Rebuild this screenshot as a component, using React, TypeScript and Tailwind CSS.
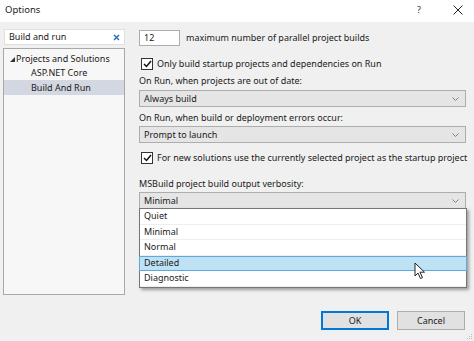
import React from "react";

const font = { fontFamily: '"Noto Sans", "Open Sans", sans-serif' };

function Chevron() {
  return (
    <svg width="7" height="4" viewBox="0 0 7 4" className="mr-[6px]">
      <path d="M0.5 0.5 L3.5 3.5 L6.5 0.5" stroke="#808080" strokeWidth="1" fill="none" />
    </svg>
  );
}

function Check() {
  return (
    <div className="w-[12px] h-[12px] border border-[#333] bg-white flex items-center justify-center shrink-0">
      <svg width="9" height="8" viewBox="0 0 9 8">
        <path d="M1 4 L3.5 6.5 L8 1" stroke="#111" strokeWidth="1.5" fill="none" />
      </svg>
    </div>
  );
}

function Select({ value }: { value: string }) {
  return (
    <div className="h-[17px] border border-[#adadad] bg-[#e5e5e5] flex items-center justify-between pl-[4px]">
      <span>{value}</span>
      <Chevron />
    </div>
  );
}

export default function App() {
  const items = ["Quiet", "Minimal", "Normal", "Detailed", "Diagnostic"];
  return (
    <div
      className="relative w-[474px] h-[341px] bg-[#f0f0f0] text-[9px] leading-[12px] text-[#1a1a1a] overflow-hidden flex flex-col whitespace-nowrap"
      style={font}
    >
      {/* title bar */}
      <div className="h-[22px] bg-white flex items-center shrink-0">
        <span className="ml-[5px] mt-[-2px] text-[9.5px]">Options</span>
        <span className="ml-auto mr-[32px] text-[#333] mt-[-2px]">?</span>
        <svg width="10" height="10" viewBox="0 0 10 10" className="mr-[11px] mt-[-2px]">
          <path d="M0.5 0.5 L9.5 9.5 M9.5 0.5 L0.5 9.5" stroke="#222" strokeWidth="1" />
        </svg>
      </div>

      <div className="flex flex-1">
        {/* left */}
        <div className="w-[122px] ml-[3px] mt-[7px] flex flex-col">
          <div className="h-[16px] ml-[1px] border border-[#e0e0e0] bg-white flex items-center justify-between pl-[4px] pr-[4px]">
            <span>Build and run</span>
            <svg width="7" height="7" viewBox="0 0 7 7">
              <path d="M1 1 L6 6 M6 1 L1 6" stroke="#1e6fc0" strokeWidth="1.4" />
            </svg>
          </div>
          <div className="mt-[3px] h-[247px] border border-[#a8a8a8] bg-[#f7f7f7] pt-[2px]">
            <div className="h-[15px] flex items-center pl-[6px]">
              <svg width="5" height="5" viewBox="0 0 5 5" className="mr-[1px] mt-[1px]">
                <path d="M5 0 L5 5 L0 5 Z" fill="#333" />
              </svg>
              <span>Projects and Solutions</span>
            </div>
            <div className="h-[14px] flex items-center pl-[27px]">ASP.NET Core</div>
            <div className="h-[15px] flex items-center pl-[27px] bg-[#d3d7e2]">Build And Run</div>
          </div>
        </div>

        {/* right */}
        <div className="ml-[14px] w-[327px] mt-[8px] flex flex-col relative">
          <div className="flex items-center h-[16px]">
            <div className="w-[41px] h-[16px] border border-[#adadad] bg-white pl-[4px] flex items-center">12</div>
            <span className="ml-[6px]">maximum number of parallel project builds</span>
          </div>
          <div className="flex items-center mt-[11px] h-[13px] ml-[2px]">
            <Check />
            <span className="ml-[4px]">Only build startup projects and dependencies on Run</span>
          </div>
          <div className="mt-[3px] h-[16px] flex items-center">On Run, when projects are out of date:</div>
          <div className="mt-[1px]"><Select value="Always build" /></div>
          <div className="mt-[3px] h-[16px] flex items-center">On Run, when build or deployment errors occur:</div>
          <div className="mt-[0px]"><Select value="Prompt to launch" /></div>
          <div className="flex items-center mt-[8px] h-[13px] ml-[2px]">
            <Check />
            <span className="ml-[4px]">For new solutions use the currently selected project as the startup project</span>
          </div>
          <div className="mt-[12px] h-[16px] flex items-center">MSBuild project build output verbosity:</div>
          <div className="mt-[0px]"><Select value="Minimal" /></div>

          {/* dropdown list overlay */}
          <div className="absolute left-0 top-[178px] w-[328px] bg-white border border-[#767676] shadow-[2px_2px_3px_rgba(0,0,0,0.35)]">
            {items.map((it) => (
              <div
                key={it}
                className={
                  it === "Detailed"
                    ? "h-[15.5px] flex items-center pl-[4px] bg-[#bee1f4] border border-[#5ea8dc] -mx-[1px]"
                    : "h-[15.5px] flex items-center pl-[4px] border-b border-[#eeeeee]"
                }
              >
                {it}
              </div>
            ))}
          </div>
        </div>
      </div>

      {/* buttons */}
      <div className="absolute left-[321px] top-[311px] flex gap-[8px]">
        <div className="w-[68px] h-[19px] border-2 border-[#0078d7] bg-[#e1e1e1] flex items-center justify-center">OK</div>
        <div className="w-[68px] h-[19px] border border-[#adadad] bg-[#e1e1e1] flex items-center justify-center">Cancel</div>
      </div>

      {/* resize grip */}
      <svg width="6" height="6" viewBox="0 0 6 6" className="absolute right-[1px] bottom-[1px]">
        <rect x="4" y="0" width="1" height="1" fill="#bbb" />
        <rect x="2" y="2" width="1" height="1" fill="#bbb" />
        <rect x="4" y="2" width="1" height="1" fill="#bbb" />
        <rect x="0" y="4" width="1" height="1" fill="#bbb" />
        <rect x="2" y="4" width="1" height="1" fill="#bbb" />
        <rect x="4" y="4" width="1" height="1" fill="#bbb" />
      </svg>

      {/* mouse cursor */}
      <svg width="13" height="18" viewBox="0 0 13 18" className="absolute left-[414px] top-[262px]">
        <path d="M1 1 L1 14 L4 11 L6.5 16.5 L8.5 15.6 L6 10.2 L10.5 10.2 Z" fill="white" stroke="#222" strokeWidth="1" strokeLinejoin="round" />
      </svg>
    </div>
  );
}
